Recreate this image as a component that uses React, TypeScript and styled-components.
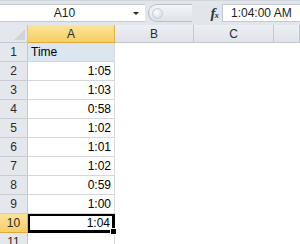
import React from "react";
import styled, { createGlobalStyle } from "styled-components";

const GlobalStyle = createGlobalStyle`
  html, body {
    margin: 0;
    padding: 0;
    background: #ffffff;
    overflow: hidden;
  }
  body {
    font-family: "Liberation Sans", Arial, sans-serif;
  }
`;

const Window = styled.div`
  width: 300px;
  height: 244px;
  overflow: hidden;
  background: #ffffff;
`;

const FormulaBar = styled.div`
  display: flex;
  align-items: flex-start;
  height: 25px;
  box-sizing: border-box;
  padding-top: 3px;
  background: #e2e6eb;
  border-top: 1px solid #d2d7de;
`;

const NameBox = styled.div`
  position: relative;
  width: 145px;
  height: 18px;
  box-sizing: border-box;
  background: #ffffff;
  border-top: 1px solid #c4cad3;
  border-bottom: 1px solid #c4cad3;
  display: flex;
  align-items: center;
  padding-right: 16px;
  justify-content: center;
  font-size: 12px;
  color: #1e1e1e;
`;

const Caret = styled.span`
  position: absolute;
  right: 6px;
  top: 7px;
  width: 0;
  height: 0;
  border-left: 3px solid transparent;
  border-right: 3px solid transparent;
  border-top: 3px solid #222;
`;

const Middle = styled.div`
  width: 77px;
  height: 18px;
  display: flex;
  align-items: center;
  justify-content: space-between;
  padding-left: 3px;
  padding-right: 4px;
  box-sizing: border-box;
`;

const Pill = styled.div`
  width: 44px;
  height: 18px;
  box-sizing: border-box;
  border: 1px solid #b9c0c9;
  border-right: none;
  border-radius: 9px 0 0 9px;
  background: linear-gradient(#f3f5f8, #dfe3e9);
  display: flex;
  align-items: center;
  padding-left: 3px;
`;

const Knob = styled.span`
  width: 9px;
  height: 9px;
  border-radius: 50%;
  background: radial-gradient(circle at 40% 35%, #ffffff, #cfd4db);
  border: 1px solid #c8ced6;
`;

const Fx = styled.span`
  font-family: "Liberation Serif", "Times New Roman", serif;
  font-style: italic;
  font-weight: bold;
  font-size: 15px;
  color: #333;
  letter-spacing: -1px;

  small {
    font-size: 9px;
  }
`;

const FormulaInput = styled.div`
  flex: 1;
  height: 18px;
  box-sizing: border-box;
  background: #ffffff;
  border-top: 1px solid #c4cad3;
  border-bottom: 1px solid #c4cad3;
  border-left: 1px solid #c4cad3;
  padding-left: 8px;
  display: flex;
  align-items: center;
  font-size: 12px;
  color: #1e1e1e;
`;

const Sheet = styled.div`
  display: grid;
  grid-template-columns: 28px 87px 79px 80px 1fr;
  grid-template-rows: 18px;
  grid-auto-rows: 19px;
  font-size: 12px;
`;

const Corner = styled.div`
  position: relative;
  background: #e4e7ec;
  border-right: 1px solid #c3c8cf;
  border-bottom: 1px solid #c3c8cf;

  &::after {
    content: "";
    position: absolute;
    right: 2px;
    bottom: 2px;
    width: 0;
    height: 0;
    border-left: 11px solid transparent;
    border-bottom: 11px solid #d0d4da;
  }
`;

const ColHeader = styled.div<{ $active?: boolean }>`
  display: flex;
  align-items: center;
  justify-content: center;
  box-sizing: border-box;
  color: #2b2b2b;
  background: ${(p) =>
    p.$active ? "linear-gradient(#fbe39a, #f6cf64)" : "linear-gradient(#eceff3, #dfe3e8)"};
  border-right: 1px solid ${(p) => (p.$active ? "#e2b24b" : "#c3c8cf")};
  border-bottom: 1px solid ${(p) => (p.$active ? "#e2a93a" : "#c3c8cf")};
`;

const RowHeader = styled.div<{ $active?: boolean }>`
  display: flex;
  align-items: center;
  justify-content: center;
  box-sizing: border-box;
  color: #2b2b2b;
  background: ${(p) => (p.$active ? "linear-gradient(#fbe39a, #f6cf64)" : "#e4e7ec")};
  border-right: 1px solid ${(p) => (p.$active ? "#e2b24b" : "#c3c8cf")};
  border-bottom: 1px solid ${(p) => (p.$active ? "#e2a93a" : "#c9cdd3")};
`;

const Cell = styled.div<{ $fill?: boolean; $right?: boolean; $selected?: boolean }>`
  position: relative;
  display: flex;
  align-items: center;
  justify-content: ${(p) => (p.$right ? "flex-end" : "flex-start")};
  padding: 0 ${(p) => (p.$selected ? "4px" : "3px")};
  box-sizing: border-box;
  color: #000;
  background: ${(p) => (p.$fill ? "#dce6f1" : "#ffffff")};
  border-right: 1px solid #d4d7db;
  border-bottom: 1px solid #d4d7db;
  ${(p) => p.$selected && "box-shadow: inset 0 0 0 2px #000; border-color: #000;"}
`;

const FillHandle = styled.span`
  position: absolute;
  right: -3px;
  bottom: -3px;
  width: 5px;
  height: 5px;
  background: #000;
  border: 1px solid #fff;
  z-index: 2;
`;

const Blank = styled.div`
  background: #ffffff;
`;

const times = ["1:05", "1:03", "0:58", "1:02", "1:01", "1:02", "0:59", "1:00", "1:04"];

export default function App() {
  return (
    <Window>
      <GlobalStyle />
      <FormulaBar>
        <NameBox>
          A10
          <Caret />
        </NameBox>
        <Middle>
          <Pill>
            <Knob />
          </Pill>
          <Fx>
            f<small>x</small>
          </Fx>
        </Middle>
        <FormulaInput>1:04:00 AM</FormulaInput>
      </FormulaBar>
      <Sheet>
        <Corner />
        <ColHeader $active>A</ColHeader>
        <ColHeader>B</ColHeader>
        <ColHeader>C</ColHeader>
        <ColHeader />

        <RowHeader>1</RowHeader>
        <Cell $fill>Time</Cell>
        <Blank />
        <Blank />
        <Blank />

        {times.map((t, i) => {
          const row = i + 2;
          const selected = row === 10;
          return (
            <React.Fragment key={row}>
              <RowHeader $active={selected}>{row}</RowHeader>
              <Cell $right $selected={selected}>
                {t}
                {selected && <FillHandle />}
              </Cell>
              <Blank />
              <Blank />
              <Blank />
            </React.Fragment>
          );
        })}

        <RowHeader>11</RowHeader>
        <Cell />
        <Blank />
        <Blank />
        <Blank />
      </Sheet>
    </Window>
  );
}
